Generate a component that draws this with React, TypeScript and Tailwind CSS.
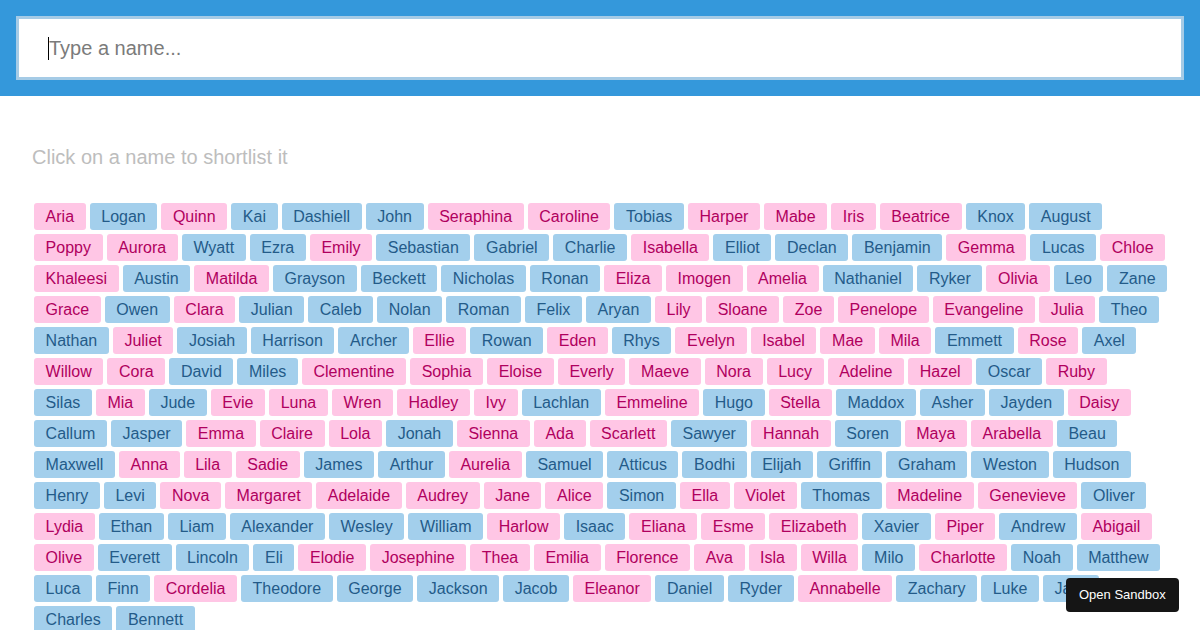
type Tag = [string, 'p' | 'b'];

const rows: string[] = [
  'Aria:p Logan:b Quinn:p Kai:b Dashiell:b John:b Seraphina:p Caroline:p Tobias:b Harper:p Mabe:p Iris:p Beatrice:p Knox:b August:b',
  'Poppy:p Aurora:p Wyatt:b Ezra:b Emily:p Sebastian:b Gabriel:b Charlie:b Isabella:p Elliot:b Declan:b Benjamin:b Gemma:p Lucas:b Chloe:p',
  'Khaleesi:p Austin:b Matilda:p Grayson:b Beckett:b Nicholas:b Ronan:b Eliza:p Imogen:p Amelia:p Nathaniel:b Ryker:b Olivia:p Leo:b Zane:b',
  'Grace:p Owen:b Clara:p Julian:b Caleb:b Nolan:b Roman:b Felix:b Aryan:b Lily:p Sloane:p Zoe:p Penelope:p Evangeline:p Julia:p Theo:b',
  'Nathan:b Juliet:p Josiah:b Harrison:b Archer:b Ellie:p Rowan:b Eden:p Rhys:b Evelyn:p Isabel:p Mae:p Mila:p Emmett:b Rose:p Axel:b',
  'Willow:p Cora:p David:b Miles:b Clementine:p Sophia:p Eloise:p Everly:p Maeve:p Nora:p Lucy:p Adeline:p Hazel:p Oscar:b Ruby:p',
  'Silas:b Mia:p Jude:b Evie:p Luna:p Wren:p Hadley:p Ivy:p Lachlan:b Emmeline:p Hugo:b Stella:p Maddox:b Asher:b Jayden:b Daisy:p',
  'Callum:b Jasper:b Emma:p Claire:p Lola:p Jonah:b Sienna:p Ada:p Scarlett:p Sawyer:b Hannah:p Soren:b Maya:p Arabella:p Beau:b',
  'Maxwell:b Anna:p Lila:p Sadie:p James:b Arthur:b Aurelia:p Samuel:b Atticus:b Bodhi:b Elijah:b Griffin:b Graham:b Weston:b Hudson:b',
  'Henry:b Levi:b Nova:p Margaret:p Adelaide:p Audrey:p Jane:p Alice:p Simon:b Ella:p Violet:p Thomas:b Madeline:p Genevieve:p Oliver:b',
  'Lydia:p Ethan:b Liam:b Alexander:b Wesley:b William:b Harlow:p Isaac:b Eliana:p Esme:p Elizabeth:p Xavier:b Piper:p Andrew:b Abigail:p',
  'Olive:p Everett:b Lincoln:b Eli:b Elodie:p Josephine:p Thea:p Emilia:p Florence:p Ava:p Isla:p Willa:p Milo:b Charlotte:p Noah:b Matthew:b',
  'Luca:b Finn:b Cordelia:p Theodore:b George:b Jackson:b Jacob:b Eleanor:p Daniel:b Ryder:b Annabelle:p Zachary:b Luke:b Jack:b',
  'Charles:b Bennett:b',
];

const parsed: Tag[][] = rows.map((row) => row.split(' ').map((item) => item.split(':') as Tag));

export default function App() {
  return (
    <div className="relative h-[630px] w-[1200px] overflow-hidden bg-white font-['Liberation_Sans',Arial,sans-serif]">
      <header className="bg-[#3498db] p-4">
        <div className="flex h-16 items-center border-[3px] border-[#a5cbe6] bg-white pl-[29px]">
          <span className="h-[23px] w-px bg-black" />
          <span className="text-[20px] text-[#7b7b7b]">Type a name...</span>
        </div>
      </header>

      <main className="px-8">
        <p className="mt-[49px] text-[20px] leading-[24px] text-[#bdbdbd]">Click on a name to shortlist it</p>
        <div className="mt-[34px] flex flex-col gap-1 px-[2px]">
          {parsed.map((row, i) => (
            <div key={i} className="flex gap-1">
              {row.map(([name, kind]) => (
                <NameTag key={name} name={name} kind={kind} />
              ))}
            </div>
          ))}
        </div>
      </main>

      <button className="absolute left-[1066px] top-[578px] h-[34px] rounded-[4px] bg-[#151515] px-[13px] text-[13px] text-white">
        Open Sandbox
      </button>
    </div>
  );
}

function NameTag({ name, kind }: { name: string; kind: 'p' | 'b' }) {
  const tone = kind === 'p' ? 'bg-[#ffc6e5] text-[#b0005e]' : 'bg-[#a3cfec] text-[#235b89]';
  return (
    <span className={`flex h-[27px] shrink-0 items-center rounded-[3px] px-[11.6px] text-[16px] ${tone}`}>
      {name}
    </span>
  );
}
